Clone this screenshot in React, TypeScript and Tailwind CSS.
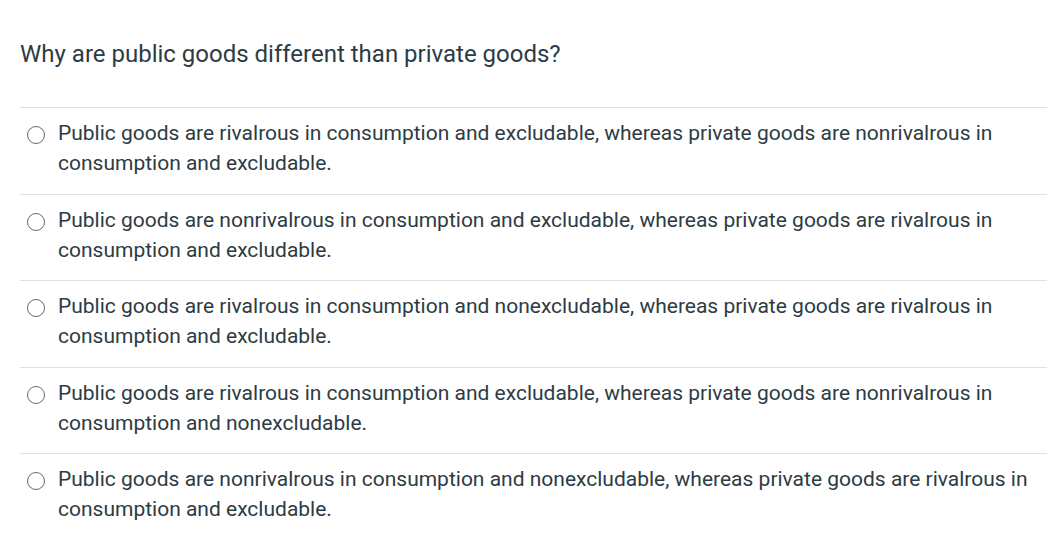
const options = [
  'Public goods are rivalrous in consumption and excludable, whereas private goods are nonrivalrous in consumption and excludable.',
  'Public goods are nonrivalrous in consumption and excludable, whereas private goods are rivalrous in consumption and excludable.',
  'Public goods are rivalrous in consumption and nonexcludable, whereas private goods are rivalrous in consumption and excludable.',
  'Public goods are rivalrous in consumption and excludable, whereas private goods are nonrivalrous in consumption and nonexcludable.',
  'Public goods are nonrivalrous in consumption and nonexcludable, whereas private goods are rivalrous in consumption and excludable.',
];

export default function App() {
  return (
    <div className="min-h-screen bg-white text-[#2d3b45] font-['Roboto',sans-serif]">
      <div className="pl-5 pt-[37px]">
        <h1 className="text-[24px] leading-[34px] font-normal">Why are public goods different than private goods?</h1>
        <div className="mt-[36px]">
          {options.map((text, i) => (
            <label
              key={i}
              className="flex border-t border-[#e0e0e0] pl-[7px] pt-[10px] pb-[15.5px] cursor-pointer"
            >
              <span className="mt-[8px] h-[18px] w-[18px] shrink-0 rounded-full border-[1.5px] border-[#6b6b6b] bg-white" />
              <span className="ml-[13px] pr-4 text-[21px] leading-[30px]">{text}</span>
            </label>
          ))}
        </div>
      </div>
    </div>
  );
}
